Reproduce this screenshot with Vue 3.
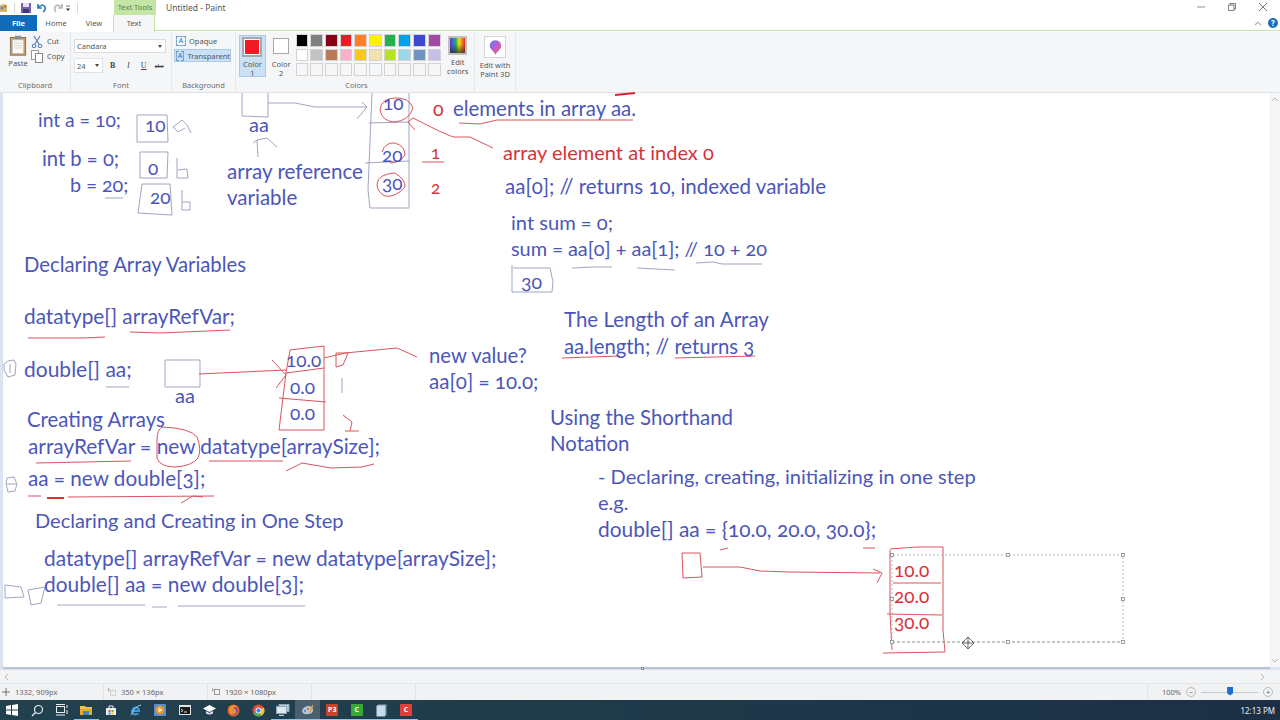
<script setup>
const swatches1 = ['#000000', '#7f7f7f', '#880015', '#ed1c24', '#ff7f27', '#fff200', '#22b14c', '#00a2e8', '#3f48cc', '#a349a4']
const swatches2 = ['#ffffff', '#c3c3c3', '#b97a57', '#ffaec9', '#ffc90e', '#efe4b0', '#b5e61d', '#99d9ea', '#7092be', '#c8bfe7']
const swatches3 = Array(10).fill('transparent')

const blueTexts = [
  { t: 'int a = 10;', x: 38, y: 121, s: 19.3 },
  { t: 'int b = 0;', x: 42, y: 159, s: 20.2 },
  { t: 'b = 20;', x: 70, y: 186, s: 19.8 },
  { t: '10', x: 145, y: 125, s: 19 },
  { t: '0', x: 148, y: 168, s: 19 },
  { t: '20', x: 150, y: 197, s: 19 },
  { t: 'aa', x: 249, y: 125, s: 20 },
  { t: 'array reference', x: 227, y: 172, s: 20.6 },
  { t: 'variable', x: 227, y: 198, s: 20.5 },
  { t: '10', x: 383, y: 103, s: 19 },
  { t: '20', x: 382, y: 155, s: 19 },
  { t: '30', x: 382, y: 183, s: 19 },
  { t: 'elements in array aa.', x: 453, y: 109, s: 20.4 },
  { t: 'aa[0]; // returns 10, indexed variable', x: 505, y: 187, s: 20.5 },
  { t: 'int sum = 0;', x: 511, y: 223, s: 20.1 },
  { t: 'sum = aa[0] + aa[1]; // 10 + 20', x: 511, y: 250, s: 19.9 },
  { t: '30', x: 521, y: 283, s: 19.5 },
  { t: 'Declaring Array Variables', x: 24, y: 265, s: 20.3 },
  { t: 'datatype[] arrayRefVar;', x: 24, y: 317, s: 20.8 },
  { t: 'double[] aa;', x: 24, y: 369, s: 21 },
  { t: 'aa', x: 175, y: 396, s: 20 },
  { t: '10.0', x: 286, y: 360, s: 19 },
  { t: '0.0', x: 290, y: 387, s: 19 },
  { t: '0.0', x: 290, y: 413, s: 19 },
  { t: 'new value?', x: 429, y: 356, s: 20.3 },
  { t: 'aa[0] = 10.0;', x: 429, y: 382, s: 20.6 },
  { t: 'The Length of an Array', x: 564, y: 320, s: 20.5 },
  { t: 'aa.length; // returns 3', x: 564, y: 347, s: 20.3 },
  { t: 'Creating Arrays', x: 27, y: 420, s: 20.4 },
  { t: 'arrayRefVar = new datatype[arraySize];', x: 28, y: 447, s: 20.8 },
  { t: 'aa = new double[3];', x: 28, y: 479, s: 20.7 },
  { t: 'Declaring and Creating in One Step', x: 35, y: 521, s: 20 },
  { t: 'datatype[] arrayRefVar = new datatype[arraySize];', x: 44, y: 559, s: 20.9 },
  { t: 'double[] aa = new double[3];', x: 44, y: 585, s: 20.9 },
  { t: 'Using the Shorthand', x: 550, y: 418, s: 20.4 },
  { t: 'Notation', x: 550, y: 444, s: 20.4 },
  { t: '- Declaring, creating, initializing in one step', x: 598, y: 477, s: 20.1 },
  { t: 'e.g.', x: 598, y: 503, s: 20 },
  { t: 'double[] aa = {10.0, 20.0, 30.0};', x: 598, y: 530, s: 20.9 },
]

const redTexts = [
  { t: '0', x: 433, y: 110, s: 19.5 },
  { t: '1', x: 431, y: 153, s: 17 },
  { t: '2', x: 431, y: 188, s: 17 },
  { t: 'array element at index 0', x: 503, y: 153, s: 20 },
  { t: '10.0', x: 894, y: 570, s: 19 },
  { t: '20.0', x: 894, y: 596, s: 19 },
  { t: '30.0', x: 894, y: 622, s: 19 },
]

// hand drawn strokes on the canvas
const grayStrokes = [
  'M242 93 L242 116 L268 117 L268 93',
  'M268 103 L295 103 L315 107 L367 107 M362 102 L367 107 L357 119',
  'M372 93 L368 190 L370 208 L409 208 L409 93',
  'M369 123 L408 122 M365 163 L409 161',
  'M137 115 L167 115 L168 142 L137 142 Z',
  'M140 152 L168 152 L167 178 L140 178 Z',
  'M142 184 L170 184 L172 215 L138 213 Z',
  'M258 157 L257 140 L253 143 M257 140 L267 138 L277 147',
  'M173 127 L182 120 L187 125 L191 133 M173 127 L178 132 L185 128',
  'M177 158 L177 178 L188 178 L187 169 L178 170',
  'M182 190 L182 210 L190 210 L190 202 L182 202',
  'M105 198 L123 198',
  'M165 360 L200 360 L200 387 L165 387 Z',
  'M8 361 L14 360 L16 364 L15 375 L8 377 L4 370 L4 364 Z M10 364 L10 373',
  'M106 387 L129 387',
  'M342 378 L342 393',
  'M7 478 L14 477 L17 484 L15 491 L8 492 L6 484 Z M7 484 L16 484',
  'M5 585 L21 587 L24 597 L5 598 Z M28 590 L45 587 L41 603 L31 605 L28 590',
  'M57 605 L145 605 M152 607 L167 607 M178 606 L305 606',
  'M512 265 L512 292 L552 292 L553 282 L550 268 L513 268',
  'M572 268 L593 267 L612 267 M637 268 L675 270 M696 263 L713 262 L722 264 L762 264',
]

const redStrokes = [
  'M380 110 Q381 99 394 98 Q409 97 413 108 Q409 121 394 122 Q382 121 380 110',
  'M382 152 Q385 142 395 143 Q405 146 405 155 Q400 163 390 163',
  'M377 184 Q378 174 395 173 Q406 180 405 187 Q395 198 385 196 Q377 192 377 184',
  'M413 118 L439 131 L453 137 L470 137 L493 148 M413 118 L408 122 L415 130',
  'M422 162 L444 162',
  'M459 123 L480 124 L497 120 L633 120',
  'M199 374 L286 370',
  'M272 360 L286 375 L276 388',
  'M279 430 L286 373 L290 350 L324 346 L324 430 Z',
  'M286 373 L324 368 M279 398 L326 402',
  'M324 358 L345 353 L397 348 L417 357',
  'M336 353 L348 353 L343 365 L336 367 Z',
  'M343 415 L352 422 L350 431 M345 431 L359 431',
  'M28 338 L83 338 L105 337 M130 332 L160 333 L230 330',
  'M162 427 Q190 428 197 437 Q202 450 198 458 Q192 466 175 467 Q160 467 157 458 L157 440 Q157 430 162 427',
  'M36 463 L131 461 M209 461 L283 461',
  'M286 471 L302 463 L331 468 L362 467 L374 464',
  'M28 496 L41 496 M68 497 L214 496 M181 503 L193 496 L203 497',
  'M562 358 L620 356 M675 358 L755 356',
  'M682 553 L700 553 L702 577 L683 578 Z',
  'M703 567 L740 567 L760 571 L790 572 L880 573 M873 569 L882 573 L877 583',
  'M890 550 L890 613 L892 650',
  'M890 549 L917 547 L943 547 L943 630 L945 652 L883 653',
  'M893 583 L941 583 M887 614 L942 615',
  'M720 550 L728 548 M863 548 L875 548',
]

const handles = [
  [892, 555], [1008, 555], [1123, 555],
  [892, 599], [1123, 599],
  [892, 642], [1008, 642], [1123, 642],
]
</script>

<template>
  <div class="paint">
    <header class="title-bar">
      <div class="quick">
        <svg class="q-paint" width="10" height="10" viewBox="0 0 10 10"><path d="M0 4 Q4 0 9 2 L9 9 L1 9 Z" fill="#d5b36a"/><circle cx="4" cy="5" r="1.5" fill="#4f8fd8"/><circle cx="7" cy="3.5" r="1" fill="#d04a3a"/></svg>
        <span class="sep"></span>
        <svg width="10" height="10" viewBox="0 0 10 10"><rect width="10" height="10" fill="#7a5fb0"/><rect x="2" width="6" height="4" fill="#e4e2f2"/><rect x="2" y="6" width="6" height="4" fill="#3d3d70"/></svg>
        <svg width="10" height="10" viewBox="0 0 10 10"><path d="M1 1 L1 5 L5 5 M1 5 Q5 0 8 4 Q9 7 6 9" fill="none" stroke="#2a7fd0" stroke-width="1.7"/></svg>
        <svg width="10" height="10" viewBox="0 0 10 10"><path d="M9 1 L9 5 L5 5 M9 5 Q5 0 2 4 Q1 7 3 9" fill="none" stroke="#b4b8bc" stroke-width="1.7"/></svg>
        <svg class="q-drop" width="6" height="10" viewBox="0 0 6 10"><path d="M1 3 H5" stroke="#777"/><path d="M1 5.5 H5 L3 8 Z" fill="#333"/></svg>
        <span class="sep"></span>
      </div>
      <div class="context-tab">Text Tools</div>
      <div class="doc-title">Untitled - Paint</div>
      <div class="window-btns">
        <svg width="10" height="10" viewBox="0 0 10 10"><path d="M0 5 H10" stroke="#777"/></svg>
        <svg width="10" height="10" viewBox="0 0 10 10"><path d="M0.5 2.5 H7.5 V9.5 H0.5 Z M2.5 2.5 V0.5 H9.5 V7.5 H7.5" fill="none" stroke="#555"/></svg>
        <svg width="10" height="10" viewBox="0 0 10 10"><path d="M0 0 L10 10 M10 0 L0 10" stroke="#555"/></svg>
      </div>
    </header>

    <nav class="tabs">
      <div class="tab file">File</div>
      <div class="tab">Home</div>
      <div class="tab">View</div>
      <div class="tab active">Text</div>
      <div class="tab-rest">
        <svg width="8" height="6" viewBox="0 0 8 6"><path d="M1 5 L4 2 L7 5" fill="none" stroke="#b5b5b5" stroke-width="1.2"/></svg>
        <span class="help">?</span>
      </div>
    </nav>

    <section class="ribbon">
      <div class="group clipboard">
        <div class="group-body clip-body">
          <div class="paste">
            <svg width="22" height="26" viewBox="0 0 22 26"><rect x="1.5" y="3" width="19" height="22" fill="#c89b62" stroke="#7d6445"/><rect x="4" y="6" width="14" height="17" fill="#fbfbf6" stroke="#bbb"/><rect x="7" y="1" width="8" height="4" fill="#8f8f8f"/><path d="M6 10 H16 M6 13 H16 M6 16 H16" stroke="#ccc"/></svg>
            <span>Paste</span>
          </div>
          <div class="clip-side">
            <div class="clip-item">
              <svg width="12" height="13" viewBox="0 0 12 13"><path d="M3 1 L8 9 M9 1 L4 9" stroke="#5a7fb0" stroke-width="1.2"/><circle cx="3" cy="11" r="1.8" fill="none" stroke="#4a76c0"/><circle cx="9" cy="11" r="1.8" fill="none" stroke="#4a76c0"/></svg>
              Cut
            </div>
            <div class="clip-item">
              <svg width="12" height="13" viewBox="0 0 12 13"><rect x="0.5" y="0.5" width="7" height="9" fill="#fff" stroke="#999"/><rect x="4.5" y="3.5" width="7" height="9" fill="#fff" stroke="#888"/></svg>
              Copy
            </div>
          </div>
        </div>
        <div class="group-label">Clipboard</div>
      </div>

      <div class="group font">
        <div class="group-body font-body">
          <div class="font-select"><span>Candara</span><i class="caret"></i></div>
          <div class="font-row">
            <div class="size-select"><span>24</span><i class="caret"></i></div>
            <b class="fmt serif">B</b>
            <i class="fmt serif">I</i>
            <u class="fmt serif">U</u>
            <s class="fmt serif small">abc</s>
          </div>
        </div>
        <div class="group-label">Font</div>
      </div>

      <div class="group background">
        <div class="group-body bg-body">
          <div class="bg-item"><span class="ai">A</span>Opaque</div>
          <div class="bg-item selected"><span class="ai">A</span>Transparent</div>
        </div>
        <div class="group-label">Background</div>
      </div>

      <div class="group colors">
        <div class="group-body colors-body">
          <div class="color-btn selected">
            <span class="chip"><span class="chip-fill red"></span></span>
            <span>Color<br>1</span>
          </div>
          <div class="color-btn second-color">
            <span class="chip small"><span class="chip-fill"></span></span>
            <span>Color<br>2</span>
          </div>
          <div class="palette">
            <span v-for="c in swatches1" :key="'a' + c" class="swatch"><span :style="{ background: c }"></span></span>
            <span v-for="c in swatches2" :key="'b' + c" class="swatch"><span :style="{ background: c }"></span></span>
            <span v-for="(c, i) in swatches3" :key="'c' + i" class="swatch empty"><span></span></span>
          </div>
          <div class="edit-btn">
            <span class="rainbow"></span>
            <span>Edit<br>colors</span>
          </div>
        </div>
        <div class="group-label">Colors</div>
      </div>

      <div class="group paint3d">
        <div class="group-body">
          <div class="edit-btn wide">
            <span class="p3d">
              <svg width="16" height="20" viewBox="0 0 16 20">
                <defs><linearGradient id="p3" x1="0" y1="0" x2="1" y2="1"><stop offset="0" stop-color="#4f7cf0"/><stop offset="0.5" stop-color="#c25fd0"/><stop offset="1" stop-color="#f0612f"/></linearGradient></defs>
                <path d="M8 1 C13 1 15 5 15 8 C15 12 10 14 8 19 C6 14 1 12 1 8 C1 5 3 1 8 1 Z" fill="url(#p3)"/>
              </svg>
            </span>
            <span>Edit with<br>Paint 3D</span>
          </div>
        </div>
      </div>
    </section>

    <main class="workspace">
      <div class="canvas">
        <svg class="strokes" width="1280" height="720" viewBox="0 0 1280 720">
          <path v-for="(d, i) in grayStrokes" :key="'g' + i" :d="d" class="stroke-gray" />
          <path v-for="(d, i) in redStrokes" :key="'r' + i" :d="d" class="stroke-red" />
          <path d="M892 642 V555 H1123 V642" class="selection" />
          <path d="M892 642 H1123" class="selection bottom" />
          <rect v-for="(h, i) in handles" :key="'h' + i" :x="h[0] - 1.5" :y="h[1] - 1.5" width="3" height="3" class="handle" />
          <path d="M968 637 L968 649 M962 643 L974 643 M965 640 L968 637 L971 640 M965 646 L968 649 L971 646 M965 640 L962 643 L965 646 M971 640 L974 643 L971 646" fill="none" stroke="#666" stroke-width="1"/>
          <path d="M615 95 L635 93" stroke="#e0202a" stroke-width="2"/>
          <path d="M47 498 L64 498" stroke="#d9303a" stroke-width="2"/>
        </svg>
        <span v-for="(w, i) in blueTexts" :key="'t' + i" class="word blue" :style="{ left: w.x + 'px', top: w.y + 'px', fontSize: w.s + 'px' }">{{ w.t }}</span>
        <span v-for="(w, i) in redTexts" :key="'n' + i" class="word red" :style="{ left: w.x + 'px', top: w.y + 'px', fontSize: w.s + 'px' }">{{ w.t }}</span>
        <span class="resize-handle"></span>
      </div>
      <div class="v-scroll">
        <svg width="10" height="8" viewBox="0 0 10 8"><path d="M2 5 L5 2 L8 5" fill="none" stroke="#b5b5b5"/></svg>
        <svg width="10" height="8" viewBox="0 0 10 8"><path d="M2 3 L5 6 L8 3" fill="none" stroke="#b5b5b5"/></svg>
      </div>
    </main>

    <div class="h-scroll">
      <svg width="8" height="10" viewBox="0 0 8 10"><path d="M5 2 L2 5 L5 8" fill="none" stroke="#b5b5b5"/></svg>
      <svg width="8" height="10" viewBox="0 0 8 10"><path d="M3 2 L6 5 L3 8" fill="none" stroke="#b5b5b5"/></svg>
    </div>

    <footer class="status-bar">
      <div class="status-cell first">
        <svg width="10" height="10" viewBox="0 0 10 10"><path d="M5 0 V10 M0 5 H10" stroke="#555"/></svg>
        1332, 909px
      </div>
      <div class="status-cell second">
        <svg width="11" height="10" viewBox="0 0 11 10"><rect x="3.5" y="2.5" width="7" height="7" fill="none" stroke="#888" stroke-dasharray="1 1"/><path d="M1 0 V4" stroke="#666"/></svg>
        350 × 136px
      </div>
      <div class="status-cell third">
        <svg width="11" height="10" viewBox="0 0 11 10"><rect x="3.5" y="1.5" width="7" height="7" fill="none" stroke="#777"/><path d="M1 0 V4" stroke="#666"/></svg>
        1920 × 1080px
      </div>
      <div class="status-cell fourth"></div>
      <div class="status-cell fifth"></div>
      <div class="zoom">
        <span class="zoom-pct">100%</span>
        <span class="zoom-btn">−</span>
        <span class="zoom-track"><span class="zoom-thumb"></span></span>
        <span class="zoom-btn">+</span>
      </div>
    </footer>

    <div class="taskbar">
      <svg class="start" width="12" height="12" viewBox="0 0 12 12"><path d="M0 2 L5 1 V5.5 H0 Z M6 1 L12 0 V5.5 H6 Z M0 6.5 H5 V11 L0 10 Z M6 6.5 H12 V12 L6 11 Z" fill="#fff"/></svg>
      <svg class="search" width="13" height="13" viewBox="0 0 13 13"><circle cx="7.5" cy="5.5" r="4" fill="none" stroke="#e8eef2" stroke-width="1.2"/><path d="M4.5 8.5 L1 12" stroke="#e8eef2" stroke-width="1.3"/></svg>
      <svg class="views" width="14" height="12" viewBox="0 0 14 12"><rect x="1.5" y="2.5" width="8" height="6" fill="none" stroke="#e8eef2"/><path d="M1 0.5 H10 M1 11 H10 M12 1 V4 M12 6 V10" stroke="#e8eef2"/></svg>
      <div class="task-items">
        <span class="task-item running">
          <svg width="12" height="12" viewBox="0 0 12 12"><path d="M0 2 H5 L6 3 H12 V5 H0 Z" fill="#f3c04a"/><rect y="5" width="12" height="6" fill="#e8a92e"/><rect x="3" y="7" width="6" height="4" fill="#3f87c0"/></svg>
        </span>
        <span class="task-item">
          <svg width="12" height="12" viewBox="0 0 12 12"><path d="M1 4 H11 V11 H1 Z" fill="#f0f0f0"/><path d="M4 4 V2 H8 V4" fill="none" stroke="#f0f0f0"/><rect x="3.5" y="6" width="2" height="2" fill="#d8552f"/><rect x="6.5" y="6" width="2" height="2" fill="#6fae3a"/><rect x="3.5" y="8.5" width="2" height="2" fill="#3b87d8"/><rect x="6.5" y="8.5" width="2" height="2" fill="#f0c030"/></svg>
        </span>
        <span class="task-item">
          <svg width="13" height="13" viewBox="0 0 13 13"><path d="M2 7 H10 C10 3 5 2 3.5 6 C2.5 9 5 12 9.5 9.5" fill="none" stroke="#3a9be0" stroke-width="2"/><path d="M2 11 Q6 2 12 1" fill="none" stroke="#8fd0f5"/></svg>
        </span>
        <span class="task-item">
          <svg width="12" height="12" viewBox="0 0 12 12"><rect width="12" height="12" rx="1" fill="#5e8fc8"/><circle cx="6" cy="6" r="4.2" fill="#f59a22"/><path d="M4.7 3.7 L8.4 6 L4.7 8.3 Z" fill="#fff"/></svg>
        </span>
        <span class="task-item">
          <svg width="12" height="10" viewBox="0 0 12 10"><rect width="12" height="10" fill="#dfe4e6"/><rect x="1" y="2" width="10" height="7" fill="#1c1c1c"/><path d="M2 4 L4 5.5 L2 7 M5 7 H8" fill="none" stroke="#ddd"/></svg>
        </span>
        <span class="task-item">
          <svg width="13" height="10" viewBox="0 0 13 10"><path d="M0 3.5 L6.5 0 L13 3.5 L6.5 7 Z" fill="#fff"/><path d="M3 6 V8.5 Q6.5 10.5 10 8.5 V6 L6.5 8 Z" fill="#dfe3e6"/></svg>
        </span>
        <span class="task-item">
          <svg width="13" height="13" viewBox="0 0 13 13"><circle cx="6.5" cy="6.5" r="6" fill="#e8622a"/><circle cx="7" cy="7" r="3.4" fill="#6a3fb0"/><path d="M2 4 Q5 0 10 2 Q7 2.5 6.5 4 Q10 5 9 9 Q7 11 4 10 Q2 8 2 4" fill="#f4a02a" opacity="0.85"/></svg>
        </span>
        <span class="task-item">
          <svg width="13" height="13" viewBox="0 0 13 13"><circle cx="6.5" cy="6.5" r="6" fill="#e24a3a"/><path d="M6.5 6.5 L1.3 9.5 A6 6 0 0 0 9.5 11.7 Z" fill="#4caf50"/><path d="M6.5 6.5 L9.5 11.7 A6 6 0 0 0 11.7 3.5 Z" fill="#f4c430"/><circle cx="6.5" cy="6.5" r="2.6" fill="#3f87e0" stroke="#fff"/></svg>
        </span>
        <span class="task-item running">
          <svg width="14" height="12" viewBox="0 0 14 12"><rect x="3" y="0.5" width="10" height="7" fill="#b9cdd8" stroke="#8ea5b2"/><rect x="0.5" y="2.5" width="10" height="7" fill="#dfe8ee" stroke="#8ea5b2"/><path d="M3 11.5 H8" stroke="#c8d4da" stroke-width="1.4"/></svg>
        </span>
        <span class="task-item running current">
          <svg width="13" height="12" viewBox="0 0 13 12"><path d="M1 8 Q1 3 7 2 Q12 2 12 6 Q12 10 7 10 Q3 11 1 8 Z" fill="#b9c4cc"/><circle cx="4" cy="7" r="1.1" fill="#4a80c8"/><circle cx="7" cy="5" r="1.1" fill="#d85a3a"/><path d="M9 8 L12 1" stroke="#d8a040" stroke-width="1.4"/></svg>
        </span>
        <span class="task-item running">
          <span class="app-tile orange">P3</span>
        </span>
        <span class="task-item running">
          <span class="app-tile green">C</span>
        </span>
        <span class="task-item running">
          <svg width="11" height="13" viewBox="0 0 11 13"><rect x="2" y="0.5" width="8.5" height="11" fill="#7fa6c4"/><rect x="0.5" y="1.5" width="8.5" height="11" fill="#c6dbea"/></svg>
        </span>
        <span class="task-item running">
          <span class="app-tile red">C</span>
        </span>
      </div>
      <span class="clock">12:13 PM</span>
    </div>
  </div>
</template>

<style scoped>
.paint {
  position: relative;
  display: flex;
  flex-direction: column;
  width: 1280px;
  height: 720px;
  overflow: hidden;
  font-family: "Noto Sans", "Open Sans", sans-serif;
  font-size: 7.5px;
  color: #555;
  background: #f5f6f7;
}

.title-bar {
  display: flex;
  align-items: flex-start;
  height: 15px;
  background: #fff;
}

.quick {
  display: flex;
  gap: 6px;
  align-items: center;
  width: 114px;
  height: 15px;
  box-sizing: border-box;
}

.quick svg {
  flex: none;
}

.q-paint {
  margin-left: -2px;
}

.q-drop {
  margin-left: -4px;
}

.sep {
  width: 1px;
  height: 10px;
  background: #d5d5d5;
}

.context-tab {
  width: 42px;
  height: 15px;
  line-height: 14px;
  text-align: center;
  color: #5d7a48;
  background: #c3e6a6;
}

.doc-title {
  padding-left: 10px;
  line-height: 15px;
  font-size: 8.5px;
  color: #555;
}

.window-btns {
  display: flex;
  gap: 23px;
  align-items: center;
  height: 14px;
  margin-left: auto;
  padding-right: 13px;
}

.window-btns svg {
  width: 8px;
  height: 8px;
}

.tabs {
  display: flex;
  height: 17px;
  background: #fff;
}

.tab {
  width: 38px;
  line-height: 16px;
  text-align: center;
  font-size: 7.5px;
}

.tab.file {
  width: 37px;
  height: 16px;
  font-weight: 700;
  color: #fff;
  background: #0f6cbd;
}

.tab.active {
  position: relative;
  z-index: 1;
  width: 42px;
  height: 17px;
  background: #f5f6f7;
  border: 1px solid #c3e6a6;
  border-top: 0;
  border-bottom: 0;
  box-sizing: border-box;
}

.tab-rest {
  flex: 1;
  display: flex;
  gap: 6px;
  align-items: center;
  justify-content: flex-end;
  height: 16px;
  padding-right: 2px;
  border-bottom: 1px solid #c3e6a6;
  box-sizing: border-box;
}

.help {
  width: 10px;
  height: 10px;
  line-height: 10px;
  text-align: center;
  font-weight: 700;
  font-size: 8px;
  color: #fff;
  background: #1a6fc0;
  border-radius: 50%;
}

.ribbon {
  display: flex;
  height: 61px;
  background: #f5f6f7;
  border-bottom: 1px solid #dfe3e6;
  box-sizing: border-box;
}

.group {
  display: flex;
  flex-direction: column;
  height: 60px;
  border-right: 1px solid #e4e6e8;
  box-sizing: border-box;
}

.group-body {
  flex: 1;
  display: flex;
}

.group-label {
  height: 13px;
  line-height: 12px;
  text-align: center;
  color: #6d6d6d;
}

.clipboard { width: 71px; }
.font { width: 101px; }
.background { width: 64px; }
.colors { width: 236px; margin-left: 3px; }
.paint3d { width: 41px; }

.clip-body {
  gap: 3px;
  padding: 3px 0 0 8px;
}

.paste {
  display: flex;
  flex-direction: column;
  gap: 2px;
  align-items: center;
  width: 20px;
}

.paste svg {
  width: 18px;
  height: 21px;
}

.clip-side {
  display: flex;
  flex-direction: column;
  gap: 3px;
}

.clip-item {
  display: flex;
  gap: 4px;
  align-items: center;
  height: 12px;
}

.font-body {
  flex-direction: column;
  gap: 5px;
  padding: 7px 0 0 3px;
}

.font-select {
  display: flex;
  align-items: center;
  justify-content: space-between;
  width: 92px;
  height: 14px;
  padding: 0 3px 0 2px;
  background: #fff;
  border: 1px solid #d9dde0;
  box-sizing: border-box;
}

.caret {
  width: 0;
  height: 0;
  border-top: 3px solid #444;
  border-right: 2px solid transparent;
  border-left: 2px solid transparent;
}

.font-row {
  display: flex;
  align-items: center;
}

.size-select {
  display: flex;
  align-items: center;
  justify-content: space-between;
  width: 29px;
  height: 15px;
  margin-right: 2px;
  padding: 0 3px 0 2px;
  background: #fff;
  border: 1px solid #e0e3e6;
  box-sizing: border-box;
}

.fmt {
  width: 15.5px;
  text-align: center;
  color: #444;
  font-size: 8px;
}

.serif {
  font-family: "Liberation Serif", serif;
}

.fmt.small {
  font-size: 6.5px;
}

.bg-body {
  flex-direction: column;
  gap: 2px;
  padding: 2px 0 0 2px;
}

.bg-item {
  display: flex;
  gap: 3px;
  align-items: center;
  width: 57px;
  height: 13px;
  padding-left: 2px;
  box-sizing: border-box;
  white-space: nowrap;
}

.bg-item.selected {
  background: #c9e0f5;
  border: 1px solid #a9cbe8;
  padding-left: 1px;
}

.ai {
  display: inline-block;
  width: 8px;
  height: 8px;
  line-height: 8px;
  text-align: center;
  font-size: 7px;
  color: #2a6fb5;
  border: 1px dashed #6f9cc4;
}

.color-btn {
  display: flex;
  flex-direction: column;
  align-items: center;
  width: 28px;
  height: 43px;
  text-align: center;
  line-height: 9px;
  box-sizing: border-box;
}

.color-btn.selected {
  margin-top: 3px;
  height: 42px;
  background: #c9e0f5;
  border: 1px solid #a9cbe8;
}

.second-color {
  margin-left: 2px;
}

.chip {
  display: block;
  flex: none;
  width: 20px;
  height: 20px;
  margin: 1px 0 3px;
  padding: 1px;
  background: #fff;
  border: 2px solid #a8a8a8;
  box-sizing: border-box;
}

.chip.small {
  width: 16px;
  height: 16px;
  margin: 6px 0 6px;
  border-width: 1px;
}

.chip-fill {
  display: block;
  width: 100%;
  height: 100%;
  background: #fff;
}

.chip-fill.red {
  background: #ed1c24;
}

.palette {
  display: grid;
  grid-template-columns: repeat(10, 14.7px);
  grid-auto-rows: 14.6px;
  align-content: start;
  margin: 1px 0 0 0;
}

.swatch {
  padding: 1px;
  background: #d3d3d3;
  border: 1px solid #f5f6f7;
  box-sizing: border-box;
}

.swatch span {
  display: block;
  width: 100%;
  height: 100%;
  background: #f5f6f7;
}

.edit-btn {
  display: flex;
  flex-direction: column;
  gap: 3px;
  align-items: center;
  width: 34px;
  padding-top: 4px;
  text-align: center;
  line-height: 9px;
}

.edit-btn.wide {
  width: 40px;
}

.rainbow {
  width: 19px;
  height: 19px;
  background: linear-gradient(180deg, transparent 40%, rgba(40, 40, 40, 0.7)), linear-gradient(90deg, #7a2fb5, #2b6fe0, #27b04a, #f4e01c, #f08a1c, #e0282c);
  border: 2px solid #c0c0c0;
  box-sizing: border-box;
}

.p3d {
  display: flex;
  align-items: center;
  justify-content: center;
  width: 20px;
  height: 20px;
  background: #fff;
  border: 1px solid #d5d5d5;
}

.p3d svg {
  width: 13px;
  height: 17px;
}

.workspace {
  position: relative;
  display: flex;
  height: 577px;
  background: #dde5f0;
}

.canvas {
  position: relative;
  flex: 1;
  margin-left: 3px;
  height: 574px;
  background: #fff;
  box-shadow: 0 2px 1px #b8c4d6;
}

.strokes {
  position: absolute;
  top: -93px;
  left: -3px;
  pointer-events: none;
}

.stroke-gray,
.stroke-red {
  fill: none;
  stroke-width: 1;
}

.stroke-gray {
  stroke: #a0a5c2;
}

.stroke-red {
  stroke: #d9555d;
}

.selection {
  fill: none;
  stroke: #a9c0c4;
  stroke-dasharray: 2 2;
  stroke-width: 1;
}

.selection.bottom {
  stroke: #7f9498;
  stroke-dasharray: 3 2;
}

.handle {
  fill: #fff;
  stroke: #888;
  stroke-width: 0.8;
}

.resize-handle {
  position: absolute;
  left: 638px;
  bottom: -3px;
  width: 3px;
  height: 3px;
  background: #fff;
  border: 1px solid #888;
  box-sizing: border-box;
}

.word {
  position: absolute;
  transform: translate(-3px, calc(-94px - 50%));
  line-height: 1;
  white-space: nowrap;
  font-family: Lato, "Open Sans", sans-serif;
  font-variant-numeric: oldstyle-nums;
}

.word.blue {
  color: #4c56ba;
}

.word.red {
  color: #d8313a;
}

.v-scroll {
  display: flex;
  flex-direction: column;
  justify-content: space-between;
  align-items: center;
  width: 10px;
  height: 574px;
  padding: 3px 0;
  background: #f5f6f7;
  box-sizing: border-box;
}

.h-scroll {
  display: flex;
  justify-content: space-between;
  align-items: center;
  height: 13px;
  padding: 0 14px 0 3px;
  background: #f3f4f6;
  box-sizing: border-box;
}

.status-bar {
  display: flex;
  align-items: center;
  height: 17px;
  background: #f1f2f3;
  border-top: 1px solid #e4e6e8;
  box-sizing: border-box;
  color: #666;
}

.status-cell {
  display: flex;
  gap: 5px;
  align-items: center;
  height: 16px;
  padding-left: 2px;
  box-sizing: border-box;
  border-right: 1px solid #e2e4e6;
}

.status-cell svg {
  flex: none;
  width: 8px;
  height: 8px;
}

.first { width: 104px; }
.second { width: 104px; padding-left: 4px; }
.third { width: 104px; padding-left: 4px; }
.fourth { width: 104px; }
.fifth { width: 732px; }

.zoom {
  display: flex;
  gap: 5px;
  align-items: center;
  margin-left: 14px;
}

.zoom-btn {
  width: 10px;
  height: 10px;
  line-height: 9px;
  text-align: center;
  border: 1px solid #bbb;
  border-radius: 50%;
  box-sizing: border-box;
  color: #666;
}

.zoom-track {
  position: relative;
  width: 57px;
  height: 1px;
  background: #c7cacc;
}

.zoom-thumb {
  position: absolute;
  top: -5px;
  left: 26px;
  width: 6px;
  height: 9px;
  background: #1c6fd0;
  clip-path: polygon(0 0, 100% 0, 100% 75%, 50% 100%, 0 75%);
}

.taskbar {
  display: flex;
  align-items: center;
  height: 20px;
  background: linear-gradient(90deg, #22414f, #1f3a4a 50%, #1c2f45);
  color: #e8eef2;
}

.start { margin-left: 6px; }
.search { margin-left: 13px; }
.views { margin-left: 11px; }

.task-items {
  display: flex;
  height: 20px;
  margin-left: 5px;
}

.task-item {
  display: flex;
  align-items: center;
  justify-content: center;
  width: 24.6px;
  height: 20px;
  box-sizing: border-box;
}

.task-item.running {
  box-shadow: inset 0 -1px 0 #8fc4e8;
}

.task-item.current {
  background: #4a606e;
}

.app-tile {
  width: 12px;
  height: 12px;
  line-height: 12px;
  text-align: center;
  font-size: 7px;
  font-weight: 700;
  color: #fff;
  border-radius: 1px;
}

.app-tile.orange { background: #c8452a; }
.app-tile.green { background: #3aa935; }
.app-tile.red { background: #e0403a; }

.clock {
  margin-left: auto;
  padding-right: 5px;
  font-size: 8px;
}
</style>

<style>
html,
body {
  margin: 0;
  overflow: hidden;
}
</style>
